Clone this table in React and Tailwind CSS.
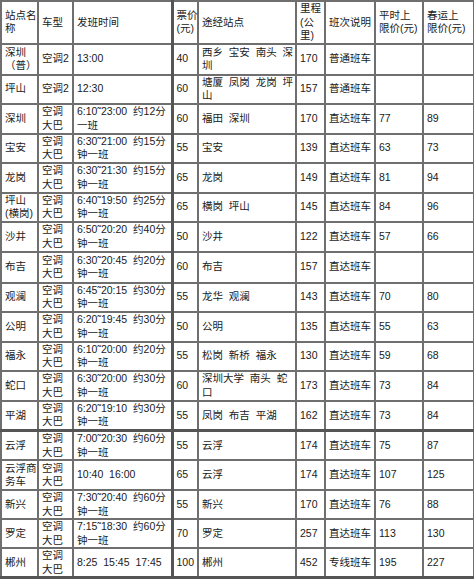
const rows = [
  { h: "h-[31px]", name: ["深圳", "（普）"], type: ["空调2"], time: ["13:00"], fare: "40", route: ["西乡  宝安  南头  深", "圳"], km: "170", note: "普通班车", p1: "", p2: "" },
  { h: "h-[29px]", name: ["坪山"], type: ["空调2"], time: ["12:30"], fare: "60", route: ["塘厦  凤岗  龙岗  坪", "山"], km: "157", note: "普通班车", p1: "", p2: "" },
  { h: "h-[30px]", name: ["深圳"], type: ["空调", "大巴"], time: ["6:10˜23:00  约12分", "一班"], fare: "60", route: ["福田  深圳"], km: "170", note: "直达班车", p1: "77", p2: "89" },
  { h: "h-[29px]", name: ["宝安"], type: ["空调", "大巴"], time: ["6:30˜21:00  约15分", "钟一班"], fare: "55", route: ["宝安"], km: "139", note: "直达班车", p1: "63", p2: "73" },
  { h: "h-[30px]", name: ["龙岗"], type: ["空调", "大巴"], time: ["6:30˜21:30  约15分", "钟一班"], fare: "65", route: ["龙岗"], km: "149", note: "直达班车", p1: "81", p2: "94" },
  { h: "h-[29px]", name: ["坪山", "(横岗)"], type: ["空调", "大巴"], time: ["6:40˜19:50  约25分", "钟一班"], fare: "65", route: ["横岗  坪山"], km: "145", note: "直达班车", p1: "84", p2: "96" },
  { h: "h-[30px]", name: ["沙井"], type: ["空调", "大巴"], time: ["6:50˜20:20  约40分", "钟一班"], fare: "50", route: ["沙井"], km: "122", note: "直达班车", p1: "57", p2: "66" },
  { h: "h-[31px]", name: ["布吉"], type: ["空调", "大巴"], time: ["6:30˜20:45  约20分", "钟一班"], fare: "60", route: ["布吉"], km: "157", note: "直达班车", p1: "", p2: "" },
  { h: "h-[28px]", name: ["观澜"], type: ["空调", "大巴"], time: ["6:45˜20:15  约30分", "钟一班"], fare: "55", route: ["龙华  观澜"], km: "143", note: "直达班车", p1: "70", p2: "80" },
  { h: "h-[30px]", name: ["公明"], type: ["空调", "大巴"], time: ["6:20˜19:45  约30分", "钟一班"], fare: "50", route: ["公明"], km: "135", note: "直达班车", p1: "55", p2: "63" },
  { h: "h-[29px]", name: ["福永"], type: ["空调", "大巴"], time: ["6:10˜20:00  约20分", "钟一班"], fare: "55", route: ["松岗  新桥  福永"], km: "130", note: "直达班车", p1: "59", p2: "68" },
  { h: "h-[30px]", name: ["蛇口"], type: ["空调", "大巴"], time: ["6:30˜20:00  约30分", "钟一班"], fare: "60", route: ["深圳大学  南头  蛇", "口"], km: "173", note: "直达班车", p1: "73", p2: "84" },
  { h: "h-[30px]", name: ["平湖"], type: ["空调", "大巴"], time: ["6:20˜19:10  约30分", "钟一班"], fare: "55", route: ["凤岗  布吉  平湖"], km: "162", note: "直达班车", p1: "73", p2: "84" },
  { h: "h-[29px]", top: true, name: ["云浮"], type: ["空调", "大巴"], time: ["7:00˜20:30  约60分", "钟一班"], fare: "55", route: ["云浮"], km: "174", note: "直达班车", p1: "75", p2: "87" },
  { h: "h-[30px]", name: ["云浮商", "务车"], type: ["空调", "大巴"], time: ["10:40  16:00"], fare: "65", route: ["云浮"], km: "174", note: "直达班车", p1: "107", p2: "125" },
  { h: "h-[29px]", name: ["新兴"], type: ["空调", "大巴"], time: ["7:30˜20:40  约60分", "钟一班"], fare: "55", route: ["新兴"], km: "170", note: "直达班车", p1: "76", p2: "88" },
  { h: "h-[29px]", name: ["罗定"], type: ["空调", "大巴"], time: ["7:15˜18:30  约60分", "钟一班"], fare: "70", route: ["罗定"], km: "257", note: "直达班车", p1: "113", p2: "130" },
  { h: "h-[28px]", last: true, name: ["郴州"], type: ["空调", "大巴"], time: ["8:25  15:45  17:45"], fare: "100", route: ["郴州"], km: "452", note: "专线班车", p1: "195", p2: "227" },
];

const Lines = ({ lines }) => (
  <div className="flex flex-col">
    {lines.map((l, i) => (
      <span key={i} className="block whitespace-pre">
        {l}
      </span>
    ))}
  </div>
);

const cell = "border-2 border-[#6f6f6f] px-[3px] py-0 align-middle text-left";

export default function App() {
  return (
    <div className="bg-white w-[474px] h-[579px] overflow-hidden">
      <table className="border-collapse table-fixed w-[473px] text-[10.5px] leading-[13.5px] text-[#1a1a1a] font-['Liberation_Sans','Noto_Sans_CJK_SC',sans-serif]">
        <colgroup>
          <col className="w-[37px]" />
          <col className="w-[35px]" />
          <col className="w-[99px]" />
          <col className="w-[26px]" />
          <col className="w-[98px]" />
          <col className="w-[29px]" />
          <col className="w-[50px]" />
          <col className="w-[48px]" />
          <col className="w-[51px]" />
        </colgroup>
        <thead>
          <tr className="h-[42px]">
            <th className={`${cell} font-normal`}><Lines lines={["站点名", "称"]} /></th>
            <th className={`${cell} font-normal`}>车型</th>
            <th className={`${cell} font-normal border-r-[3px] border-r-[#555]`}>发班时间</th>
            <th className={`${cell} font-normal`}><Lines lines={["票价", "(元)"]} /></th>
            <th className={`${cell} font-normal`}>途经站点</th>
            <th className={`${cell} font-normal`}><Lines lines={["里程", "(公", "里)"]} /></th>
            <th className={`${cell} font-normal`}>班次说明</th>
            <th className={`${cell} font-normal`}><Lines lines={["平时上", "限价(元)"]} /></th>
            <th className={`${cell} font-normal`}><Lines lines={["春运上", "限价(元)"]} /></th>
          </tr>
        </thead>
        <tbody>
          {rows.map((r, i) => (
            <tr
              key={i}
              className={`${r.h} ${r.top ? "[&>td]:border-t-[3px] [&>td]:border-t-[#555]" : ""} ${r.last ? "[&>td]:border-b-[3px] [&>td]:border-b-[#555]" : ""}`}
            >
              <td className={cell}><Lines lines={r.name} /></td>
              <td className={cell}><Lines lines={r.type} /></td>
              <td className={`${cell} border-r-[3px] border-r-[#555]`}><Lines lines={r.time} /></td>
              <td className={cell}>{r.fare}</td>
              <td className={cell}><Lines lines={r.route} /></td>
              <td className={cell}>{r.km}</td>
              <td className={`${cell} whitespace-nowrap`}>{r.note}</td>
              <td className={cell}>{r.p1}</td>
              <td className={cell}>{r.p2}</td>
            </tr>
          ))}
        </tbody>
      </table>
    </div>
  );
}
